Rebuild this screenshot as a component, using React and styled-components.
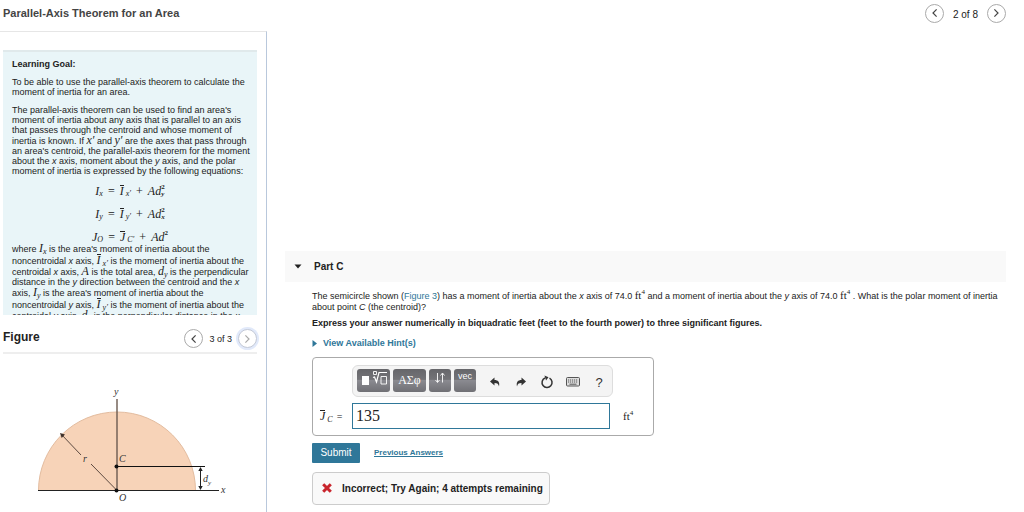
import React from 'react';
import styled, { createGlobalStyle, css } from 'styled-components';

const GlobalStyle = createGlobalStyle`
  * {
    box-sizing: border-box;
  }

  html,
  body,
  #root {
    height: 100%;
    margin: 0;
  }

  body {
    overflow: hidden;
    background: #fff;
    color: #222;
    font-family: "Liberation Sans", Arial, sans-serif;
    font-size: 9px;
    line-height: 11px;
  }

  button,
  input {
    font-family: inherit;
  }
`;

const Chevron = ({ back }) => (
  <svg width="7" height="10" viewBox="0 0 7 10" fill="none" stroke="currentColor" strokeWidth="1.2">
    <path d={back ? 'M5.6 1.4 2 5l3.6 3.6' : 'M1.4 1.4 5 5 1.4 8.6'} />
  </svg>
);

const Pager = ({ label, name, focusNext }) => (
  <PagerNav aria-label={name}>
    <RoundButton type="button" aria-label={`Previous ${name}`}>
      <Chevron back />
    </RoundButton>
    <span>{label}</span>
    <RoundButton type="button" aria-label={`Next ${name}`} $glow={focusNext}>
      <Chevron />
    </RoundButton>
  </PagerNav>
);

const Barred = ({ letter, sub }) => (
  <React.Fragment>
    <Bar>{letter}</Bar>
    <Sub $wide>{sub}</Sub>
  </React.Fragment>
);

const LearningGoal = () => (
  <Goal>
    <h2>Learning Goal:</h2>
    <p>
      To be able to use the parallel-axis theorem to calculate the
      <br />
      moment of inertia for an area.
    </p>
    <p>
      The parallel-axis theorem can be used to find an area's
      <br />
      moment of inertia about any axis that is parallel to an axis
      <br />
      that passes through the centroid and whose moment of
      <br />
      inertia is known. If <Var>x′</Var> and <Var>y′</Var> are the axes that pass through
      <br />
      an area's centroid, the parallel-axis theorem for the moment
      <br />
      about the <i>x</i> axis, moment about the <i>y</i> axis, and the polar
      <br />
      moment of inertia is expressed by the following equations:
    </p>
    <Equations>
      <Equation>
        I<Sub>x</Sub>
        <Op>=</Op>
        <Barred letter="I" sub="x′" />
        <Op>+</Op>
        Ad
        <Scripts>
          <span>2</span>
          <i>y</i>
        </Scripts>
      </Equation>
      <Equation>
        I<Sub>y</Sub>
        <Op>=</Op>
        <Barred letter="I" sub="y′" />
        <Op>+</Op>
        Ad
        <Scripts>
          <span>2</span>
          <i>x</i>
        </Scripts>
      </Equation>
      <Equation>
        J<Sub>O</Sub>
        <Op>=</Op>
        <Barred letter="J" sub="C′" />
        <Op>+</Op>
        Ad
        <Scripts>
          <span>2</span>
          <i>&nbsp;</i>
        </Scripts>
      </Equation>
    </Equations>
    <p>
      where{' '}
      <Var>
        I<Sub>x</Sub>
      </Var>{' '}
      is the area's moment of inertia about the
      <br />
      noncentroidal <i>x</i> axis,{' '}
      <Var>
        <Barred letter="I" sub="x′" />
      </Var>{' '}
      is the moment of inertia about the
      <br />
      centroidal <i>x</i> axis, <Var>A</Var> is the total area,{' '}
      <Var>
        d<Sub>y</Sub>
      </Var>{' '}
      is the perpendicular
      <br />
      distance in the <i>y</i> direction between the centroid and the <i>x</i>
      <br />
      axis,{' '}
      <Var>
        I<Sub>y</Sub>
      </Var>{' '}
      is the area's moment of inertia about the
      <br />
      noncentroidal <i>y</i> axis,{' '}
      <Var>
        <Barred letter="I" sub="y′" />
      </Var>{' '}
      is the moment of inertia about the
      <br />
      centroidal <i>y</i> axis,{' '}
      <Var>
        d<Sub>x</Sub>
      </Var>{' '}
      is the perpendicular distance in the <i>x</i>
    </p>
  </Goal>
);

const SemicircleFigure = () => (
  <FigureDrawing viewBox="0 0 200 120" role="img" aria-label="Semicircle of radius r with centroid C">
    <path d="M5.5 103.5a78.5 78.5 0 0 1 157 0z" fill="#f7d3b8" stroke="#e3bc9f" strokeWidth="1" />
    <path d="M84 12v91" stroke="#6b5a50" strokeWidth="1.4" />
    <path d="M84 79.500H172" stroke="#111" strokeWidth="1.2" />
    <path d="M5 103.500H186" stroke="#222" strokeWidth="1.2" />
    <path d="M84 103.500 58 77M48 68 28 47" stroke="#5d4a40" strokeWidth="1" />
    <path d="m27 46 5 1.600-3.300 3.300z" fill="#3d302a" />
    <path d="M167.500 81v21" stroke="#222" strokeWidth="1" />
    <path d="m167.500 80 2.200 4h-4.400zM167.500 103l2.200-4h-4.400z" fill="#222" />
    <circle cx="83.500" cy="79.500" r="2" fill="#111" />
    <circle cx="83.500" cy="103.500" r="2" fill="#111" />
    <text x="81" y="8">y</text>
    <text x="86" y="75">C</text>
    <text x="86" y="114">O</text>
    <text x="50" y="75">r</text>
    <text x="188" y="106">x</text>
    <text x="170" y="95">d</text>
    <text x="175" y="98" fontSize="7">y</text>
  </FigureDrawing>
);

const Toolbar = () => (
  <ToolbarBox role="toolbar" aria-label="Equation tools">
    <KeyButton type="button" $wide aria-label="Templates">
      <svg width="28" height="20" viewBox="0 0 28 20" fill="none" stroke="#fff">
        <path d="M2 5h7v9H2z" fill="#fff" stroke="none" />
        <path d="m13 6.500 1.500-.5 2 5L19 1.500h8" strokeWidth="1.200" />
        <path d="M21 5.500h5.500v7.500H21zM13.500.5h3v3h-3z" strokeWidth=".9" />
      </svg>
    </KeyButton>
    <KeyButton type="button" $wide $serif>
      ΑΣφ
    </KeyButton>
    <KeyButton type="button" aria-label="Subscript and superscript">
      <svg width="12" height="14" viewBox="0 0 12 14" fill="none" stroke="#fff" strokeWidth=".9">
        <path d="M3.500 2v9M1.500 9l2 2.500 2-2.500M8.500 11.500V2.500M6.500 4.500l2-2.500 2 2.500" />
      </svg>
    </KeyButton>
    <KeyButton type="button">vec</KeyButton>
    <PlainTools>
      <ToolButton type="button" aria-label="Undo">
        <svg width="12" height="12" viewBox="0 0 12 12" fill="currentColor">
          <path d="M1 5.500 5.500 1.500v2.500c3.500 0 5.500 2 4.500 6.500C9.500 8 8.500 7 5.500 7v2.500z" />
        </svg>
      </ToolButton>
      <ToolButton type="button" aria-label="Redo">
        <svg width="12" height="12" viewBox="0 0 12 12" fill="currentColor">
          <path d="M11 5.500 6.500 1.500v2.500C3 4 1 6 2 10.500 2.500 8 3.500 7 6.500 7v2.500z" />
        </svg>
      </ToolButton>
      <ToolButton type="button" aria-label="Reset">
        <svg width="14" height="14" viewBox="0 0 14 14" fill="none" stroke="currentColor" strokeWidth="1.500">
          <path d="M9.500 3.200a5 5 0 1 1-4.500-.2" />
          <path d="m4.500.5 4 1.800L6 5.500z" fill="currentColor" stroke="none" />
        </svg>
      </ToolButton>
      <ToolButton type="button" aria-label="Keyboard">
        <svg width="14" height="10" viewBox="0 0 14 10" fill="none" stroke="#555">
          <rect x=".5" y=".5" width="13" height="8.500" rx="1" fill="#ddd" />
          <path d="M2 3h10M2 5h10" strokeDasharray="1.200 .8" />
          <path d="M3.500 7.200h7" />
        </svg>
      </ToolButton>
      <ToolButton type="button" aria-label="Help">
        ?
      </ToolButton>
    </PlainTools>
  </ToolbarBox>
);

const PartC = () => (
  <Main>
    <PartHeader>
      <svg width="8" height="5" viewBox="0 0 8 5" fill="#222">
        <path d="M.5.500h7L4 4.500z" />
      </svg>
      <h2>Part C</h2>
    </PartHeader>
    <PartBody>
      <Question>
        The semicircle shown (<a href="#figure">Figure 3</a>) has a moment of inertia about the <i>x</i> axis of 74.0{' '}
        <Unit>
          ft<sup>4</sup>
        </Unit>{' '}
        and a moment of inertia about the <i>y</i> axis of 74.0{' '}
        <Unit>
          ft<sup>4</sup>
        </Unit>{' '}
        . What is the polar moment of inertia
        <br />
        about point <i>C</i> (the centroid)?
      </Question>
      <Instruction>
        Express your answer numerically in biquadratic feet (feet to the fourth power) to three significant figures.
      </Instruction>
      <HintLink href="#hints">
        <svg width="5" height="7" viewBox="0 0 5 7" fill="currentColor">
          <path d="M.5 0 5 3.500.5 7z" />
        </svg>
        View Available Hint(s)
      </HintLink>
      <AnswerBox>
        <Toolbar />
        <AnswerLabel htmlFor="answer">
          <Bar>J</Bar>
          <Sub $wide>C</Sub>
          <span>=</span>
        </AnswerLabel>
        <AnswerInput id="answer" type="text" defaultValue="135" />
        <AnswerUnit>
          ft<sup>4</sup>
        </AnswerUnit>
      </AnswerBox>
      <Actions>
        <SubmitButton type="button">Submit</SubmitButton>
        <a href="#previous">Previous Answers</a>
      </Actions>
      <Feedback role="status">
        <svg width="10" height="10" viewBox="0 0 10 10" stroke="#c9252d" strokeWidth="3">
          <path d="m1.200 1.200 7.600 7.600M8.800 1.200 1.200 8.800" />
        </svg>
        Incorrect; Try Again; 4 attempts remaining
      </Feedback>
    </PartBody>
  </Main>
);

const App = () => (
  <React.Fragment>
    <GlobalStyle />
    <Page>
      <Header>
        <h1>Parallel-Axis Theorem for an Area</h1>
        <Pager name="item" label="2 of 8" />
      </Header>
      <Columns>
        <Sidebar>
          <LearningGoal />
          <FigureHeader id="figure">
            <h2>Figure</h2>
            <Pager name="figure" label="3 of 3" focusNext />
          </FigureHeader>
          <SemicircleFigure />
        </Sidebar>
        <PartC />
      </Columns>
    </Page>
  </React.Fragment>
);

export default App;

const serif = '"Liberation Serif", "Times New Roman", serif';
const blue = '#2f7799';

const Page = styled.div`
  display: flex;
  flex-direction: column;
  height: 100%;
`;

const Header = styled.header`
  display: flex;
  align-items: center;
  justify-content: space-between;
  height: 31px;
  padding: 0 18px 5px 3px;

  h1 {
    margin: 0;
    color: #444;
    font-size: 11px;
    line-height: 14px;
  }
`;

const PagerNav = styled.nav`
  display: flex;
  align-items: center;
  gap: 9px;
  font-size: 10px;

  span {
    padding-top: 2px;
  }
`;

const RoundButton = styled.button`
  display: flex;
  align-items: center;
  justify-content: center;
  width: 19px;
  height: 19px;
  padding: 0;
  border: 1px solid #aaa;
  border-radius: 50%;
  background: #fff;
  color: #444;

  ${props =>
    props.$glow &&
    css`
      border-color: #c3c9d6;
      color: #aaa;
      box-shadow: 0 0 0 2px #e1e9fa;
    `}
`;

const Columns = styled.div`
  display: flex;
  flex: 1;
  min-height: 0;
`;

const Sidebar = styled.aside`
  flex: none;
  width: 26%;
  min-width: 267px;
  padding: 18px 9px 0 3px;
  border-top: 1px solid #e6e6e6;
  border-right: 1px solid #b9c8dc;
  overflow: hidden;
`;

const Goal = styled.section`
  height: 265px;
  padding: 7px 9px 0;
  border-top: 2px solid #e0e9eb;
  background: #e9f5f8;
  line-height: 10px;
  overflow: hidden;
  white-space: nowrap;

  h2 {
    margin: 0 0 7px;
    font-size: 9px;
    line-height: 11px;
  }

  p {
    margin: 0 0 8px;
  }

  p:last-child {
    margin: 0;
  }
`;

const Var = styled.i`
  font-family: ${serif};
  font-size: 12px;
  line-height: 10px;
`;

const Sub = styled.i`
  position: relative;
  top: 2px;
  margin-left: ${props => (props.$wide ? '2px' : '0')};
  font-family: ${serif};
  font-size: 8px;
  line-height: 1;
`;

const Bar = styled.i`
  display: inline-block;
  height: 11px;
  border-top: 1px solid currentColor;
  line-height: 11px;
`;

const Equations = styled.div`
  display: flex;
  flex-direction: column;
  align-items: center;
  gap: 10px;
`;

const Equation = styled.div`
  display: flex;
  align-items: center;
  height: 13px;
  font-family: ${serif};
  font-size: 12px;
  font-style: italic;

  ${Sub} {
    top: 3px;
  }
`;

const Op = styled.span`
  margin: 0 5px;
  font-style: normal;
`;

const Scripts = styled.span`
  display: flex;
  flex-direction: column;
  font-size: 7px;
  font-style: normal;
  font-weight: bold;
  line-height: 7px;
`;

const FigureHeader = styled.div`
  display: flex;
  align-items: center;
  justify-content: space-between;
  height: 39px;
  border-bottom: 2px solid #eee;

  h2 {
    margin: 0;
    padding-top: 8px;
    font-size: 12px;
  }

  nav {
    padding-top: 10px;
    gap: 6px;
    font-size: 9px;
  }
`;

const FigureDrawing = styled.svg`
  display: block;
  width: 200px;
  margin: 33px 0 0 30px;
  font-family: ${serif};
  font-size: 10px;
  font-style: italic;
  fill: #333;
`;

const Main = styled.main`
  flex: 1;
  min-width: 0;
  padding: 220px 18px 0;
`;

const PartHeader = styled.div`
  display: flex;
  align-items: center;
  gap: 12px;
  height: 31px;
  padding-left: 9px;
  background: #f9f9f9;

  h2 {
    margin: 0;
    font-size: 10px;
  }
`;

const PartBody = styled.div`
  display: flex;
  flex-direction: column;
  align-items: flex-start;
  padding: 7px 0 0 27px;

  a {
    color: ${blue};
  }
`;

const Question = styled.p`
  margin: 0;
  white-space: nowrap;

  a {
    text-decoration: none;
  }
`;

const Unit = styled.span`
  font-family: ${serif};
  font-size: 11px;

  sup {
    font-size: 7px;
    line-height: 1;
  }
`;

const Instruction = styled.p`
  margin: 5px 0 9px;
  font-weight: bold;
`;

const HintLink = styled.a`
  display: flex;
  align-items: center;
  gap: 6px;
  font-weight: bold;
  text-decoration: none;
`;

const AnswerBox = styled.div`
  display: grid;
  grid-template-columns: 32px 258px auto;
  row-gap: 6px;
  align-items: center;
  width: 48%;
  min-width: 342px;
  margin-top: 8px;
  padding: 7px 7px 6px;
  border: 1px solid #aaa;
  border-radius: 4px;
`;

const ToolbarBox = styled.div`
  grid-column: 2 / 4;
  display: flex;
  align-items: center;
  gap: 3px;
  width: 261px;
  height: 32px;
  padding: 0 4px;
  border: 1px solid #ddd;
  border-radius: 6px;
  background: #f4f4f4;
`;

const KeyButton = styled.button`
  display: flex;
  flex: none;
  align-items: flex-start;
  justify-content: center;
  width: ${props => (props.$wide ? '33px' : '22px')};
  height: 23px;
  padding: ${props => (props.$serif ? '4px' : '2px')} 0;
  border: 0;
  border-radius: 3px;
  background: linear-gradient(#66666a 0, #737377 45%, #8a8a90 50%, #707075 100%);
  color: #fff;
  font-family: ${props => (props.$serif ? serif : 'inherit')};
  font-size: ${props => (props.$serif ? '12px' : '9px')};
`;

const PlainTools = styled.div`
  display: flex;
  align-items: center;
  gap: 6px;
  padding: 3px 0 0 6px;
`;

const ToolButton = styled.button`
  display: flex;
  flex: none;
  align-items: center;
  justify-content: center;
  width: 20px;
  height: 20px;
  padding: 0;
  border: 0;
  background: none;
  color: #333;
  font-size: 13px;
`;

const AnswerLabel = styled.label`
  font-family: ${serif};
  font-size: 12px;

  span {
    margin-left: 4px;
    font-size: 10px;
  }
`;

const AnswerInput = styled.input`
  width: 100%;
  height: 26px;
  padding: 0 3px;
  border: 1px solid ${blue};
  background: #fff;
  color: #222;
  font-family: ${serif};
  font-size: 16px;
`;

const AnswerUnit = styled.span`
  padding-left: 13px;
  font-family: ${serif};
  font-size: 11px;

  sup {
    font-size: 7px;
    line-height: 1;
  }
`;

const Actions = styled.div`
  display: flex;
  align-items: center;
  gap: 14px;
  margin-top: 7px;
  font-size: 8px;
  font-weight: bold;
`;

const SubmitButton = styled.button`
  width: 48px;
  height: 20px;
  padding: 0;
  border: 0;
  border-radius: 1px;
  background: ${blue};
  color: #fff;
  font-size: 10px;
`;

const Feedback = styled.div`
  display: flex;
  align-items: center;
  gap: 10px;
  height: 33px;
  margin-top: 9px;
  padding: 0 6px 0 9px;
  border: 1px solid #ccc;
  border-radius: 4px;
  background: #f9f9f9;
  font-size: 10px;
  font-weight: bold;
`;
